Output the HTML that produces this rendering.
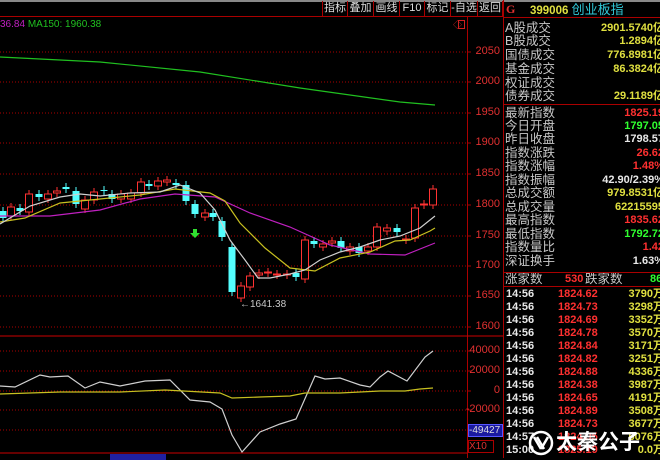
<!DOCTYPE html>
<html><head><meta charset="utf-8"><style>
*{margin:0;padding:0;box-sizing:border-box}
body{width:660px;height:458px;background:#000;overflow:hidden;position:relative;font-family:"Liberation Sans","Noto Sans CJK SC",sans-serif;font-size:12px}
.abs{position:absolute;white-space:nowrap;line-height:13px}
.btn{position:absolute;top:1px;height:16px;border-right:1px solid #a00;color:#ddd;font-size:11px;line-height:15px;text-align:center}
.lab{position:absolute;left:505px;color:#c8c8c8;font-size:12.5px;line-height:13px;white-space:nowrap}
.val{position:absolute;right:-4px;font-size:11px;line-height:13px;font-weight:bold;text-align:right;white-space:nowrap}
.ax{position:absolute;right:160px;color:#e03030;font-size:11px;line-height:11px}
.y{color:#e0e040}.r{color:#ff3030}.g{color:#30ff30}.w{color:#e8e8e8}
</style></head><body>
<div class="abs" style="left:0;top:0;width:660px;height:2px;background:#888"></div>
<div class="abs" style="left:0;top:16px;width:503px;height:1px;background:#a00"></div>
<div class="btn" style="left:322px;width:26px;border-left:1px solid #a00">指标</div>
<div class="btn" style="left:348px;width:26px">叠加</div>
<div class="btn" style="left:374px;width:26px">画线</div>
<div class="btn" style="left:400px;width:25px">F10</div>
<div class="btn" style="left:425px;width:26px">标记</div>
<div class="btn" style="left:451px;width:27px">-自选</div>
<div class="btn" style="left:478px;width:25px">返回</div>
<div class="abs" style="left:503px;top:0;width:1px;height:458px;background:#a00"></div>
<div class="abs" style="left:467px;top:17px;width:1px;height:441px;background:#a00"></div>
<div class="abs" style="left:506px;top:3px;color:#e03030;font-size:12px;font-family:'Liberation Serif',serif;font-weight:bold">G</div>
<div class="abs" style="left:530px;top:3px;color:#e0e040;font-size:11.5px;font-weight:bold">399006 <span style="color:#30c8d8;font-weight:normal;font-size:13px">创业板指</span></div>
<div class="abs" style="left:503px;top:17px;width:157px;height:1px;background:#a00"></div>
<div class="abs" style="left:0;top:18px;color:#c020c0;font-size:10px">36.84 <span style="color:#20c020">MA150: 1960.38</span></div>
<div class="abs" style="left:453px;top:19px;color:#d02020;font-size:9px">◇</div>
<div class="abs" style="left:458px;top:20px;width:7px;height:9px;border:1px solid #d02020"></div>

<svg class="abs" style="left:0;top:0" width="503" height="458" id="ch"></svg>

<div id="axes"></div>
<div id="rp"></div>

<div class="abs" style="left:468px;top:424px;width:35px;height:13px;background:#1a1aa0;border:1px solid #55f;color:#ddd;font-size:10px;line-height:11px">-49427</div>
<div class="abs" style="left:468px;top:440px;width:26px;height:13px;border:1px solid #a00;color:#e03030;font-size:10px;line-height:11px">X10</div>
<div class="abs" style="left:110px;top:454px;width:56px;height:6px;background:#2020a0"></div>
<div class="abs" style="left:503px;top:272px;width:157px;height:1px;background:#a00"></div>
<div class="abs" style="left:503px;top:286px;width:157px;height:1px;background:#a00"></div>
<div class="abs" style="left:503px;top:104px;width:157px;height:1px;background:#a00"></div>
<svg class="abs" style="left:528px;top:430px" width="26" height="26" viewBox="0 0 26 26"><circle cx="13" cy="13" r="11" fill="none" stroke="#fff" stroke-width="2.5"/><path d="M6 7 L13 19 M13 19 L20 7 M9 7 L16 19" stroke="#fff" stroke-width="2.5" fill="none"/></svg>
<div class="abs" style="left:556px;top:431px;line-height:24px;color:#fff;font-size:21px;font-weight:bold">太秦公子</div>
<script>
var s='';
function L(x1,y1,x2,y2,c,d){s+='<line x1="'+x1+'" y1="'+y1+'" x2="'+x2+'" y2="'+y2+'" stroke="'+c+'" stroke-width="1"'+(d?' stroke-dasharray="1,2"':'')+'/>';}
function P(pts,c){s+='<polyline fill="none" stroke="'+c+'" stroke-width="1.2" points="'+pts.map(p=>p.join(',')).join(' ')+'"/>';}
var gy=[52,82,113,143,174,205,236,266,296,327];
gy.forEach(y=>{L(0,y,467,y,'#a00',1);L(467,y,471,y,'#a00');});
L(0,336,503,336,'#c00');
[351,371,391,410,430].forEach(y=>{L(0,y,467,y,'#a00',1);L(467,y,471,y,'#a00');});
L(0,453,467,453,'#c00');
var c=[[3,211,218,0],[11,207,216,1],[20,208,211,0],[29,194,212,1],[39,194,197,0],[48,194,199,1],[57,191,193,1],[66,187,189,0],[76,191,204,0],[85,200,209,1],[94,192,200,1],[104,190,191,0],[112,194,199,0],[121,194,199,1],[131,193,199,1],[141,182,193,1],[149,184,186,0],[158,181,186,1],[167,180,182,1],[176,183,185,0],[186,185,201,0],[195,204,214,0],[205,213,217,1],[213,213,217,0],[222,221,237,0],[232,247,292,0],[241,286,298,1],[250,276,287,1],[259,273,275,1],[268,272,273,1],[277,274,275,1],[287,274,275,1],[296,273,277,0],[305,240,279,1],[314,241,244,0],[323,244,247,1],[332,241,243,1],[341,241,248,0],[350,247,251,1],[359,247,253,0],[368,247,251,1],[377,227,247,1],[387,228,231,1],[397,228,232,0],[406,239,240,1],[415,208,238,1],[424,204,205,1],[433,189,205,1]];
c.forEach(k=>{var x=k[0],t=k[1],b=k[2],col=k[3]?'#ff3232':'#54ffff';L(x,t-4,x,b+4,col);
if(k[3])s+='<rect x="'+(x-3.5)+'" y="'+t+'" width="7" height="'+Math.max(b-t,1)+'" fill="#000" stroke="'+col+'"/>';
else s+='<rect x="'+(x-3.5)+'" y="'+t+'" width="7" height="'+Math.max(b-t,1)+'" fill="'+col+'"/>';});
P([[0,57],[100,62],[200,72],[300,88],[400,102],[435,105]],'#20c020');
P([[0,216],[50,216],[100,210],[140,199],[175,194],[215,197],[250,213],[290,227],[330,245],[370,254],[405,255],[435,243]],'#c020c0');
P([[0,222],[25,218],[60,203],[100,199],[140,195],[175,189],[210,193],[225,201],[240,223],[265,248],[290,268],[315,271],[340,258],[370,252],[395,241],[410,240],[430,231],[435,228]],'#c8c020');
P([[0,224],[30,206],[60,197],[80,194],[100,196],[130,193],[160,192],[180,185],[200,193],[215,210],[230,240],[245,260],[258,278],[270,278],[290,274],[305,270],[320,260],[340,252],[360,247],[380,240],[400,236],[420,228],[435,216]],'#d0d0d0');
P([[0,386],[15,387],[40,375],[50,377],[68,376],[85,388],[100,382],[120,386],[145,381],[170,380],[190,400],[210,402],[222,409],[232,435],[242,452],[260,432],[280,424],[296,419],[315,376],[325,379],[340,378],[360,385],[370,387],[380,377],[388,371],[407,381],[425,357],[433,351]],'#d0d0d0');
P([[0,394],[60,392],[120,392],[165,390],[220,393],[232,398],[260,397],[290,396],[305,393],[340,393],[380,391],[405,391],[420,389],[433,388]],'#c8c020');
s+='<path d="M193 229 h4 v4 h3 l-5 5 l-5 -5 h3z" fill="#30e030"/>';
s+='<text x="240" y="307" fill="#c8c8c8" font-size="10" font-family="Liberation Sans">←1641.38</text>';
document.getElementById('ch').innerHTML=s;
var a='';
var lbl=[[2050,52],[2000,82],[1950,113],[1900,143],[1850,174],[1800,205],[1750,236],[1700,266],[1650,296],[1600,327],['40000',351],['20000',371],['0',391],['-20000',410]];
lbl.forEach(l=>a+='<div class="ax" style="top:'+(l[1]-6)+'px">'+l[0]+'</div>');
document.getElementById('axes').innerHTML=a;
var r='';
var rows=[['A股成交','2901.5740亿','y'],['B股成交','1.2894亿','y'],['国债成交','776.8981亿','y'],['基金成交','86.3824亿','y'],['权证成交','',''],['债券成交','29.1189亿','y'],['最新指数','1825.19','r'],['今日开盘','1797.05','g'],['昨日收盘','1798.57','w'],['指数涨跌','26.62','r'],['指数涨幅','1.48%','r'],['指数振幅','42.90/2.39%','w'],['总成交额','979.8531亿','y'],['总成交量','62215595','y'],['最高指数','1835.62','r'],['最低指数','1792.72','g'],['指数量比','1.42','r'],['深证换手','1.63%','w']];
var ys=[22,35,49,63,77,90,107,120,133,147,160,174,187,201,214,228,241,255];
rows.forEach((w,i)=>{r+='<div class="lab" style="top:'+ys[i]+'px">'+w[0]+'</div><div class="val '+w[2]+'" style="top:'+ys[i]+'px">'+w[1]+'</div>';});
r+='<div class="lab" style="top:273px">涨家数</div><div class="abs r" style="left:565px;top:273px;font-size:11px;font-weight:bold">530</div><div class="abs" style="left:585px;top:273px;color:#c8c8c8;font-size:12.5px">跌家数</div><div class="abs g" style="left:650px;top:273px;font-size:11px;font-weight:bold">86</div>';
var t=[['14:56','1824.62','3790'],['14:56','1824.73','3298'],['14:56','1824.69','3352'],['14:56','1824.78','3570'],['14:56','1824.84','3171'],['14:56','1824.82','3251'],['14:56','1824.88','4336'],['14:56','1824.38','3987'],['14:56','1824.65','4191'],['14:56','1824.89','3508'],['14:56','1824.73','3677'],['14:57','1824.95','6076'],['15:00','1825.19','0.0']];
t.forEach((w,i)=>{var y=288+i*13;r+='<div class="abs w" style="left:506px;top:'+y+'px;font-size:11px;font-weight:bold">'+w[0]+'</div><div class="abs r" style="left:558px;top:'+y+'px;font-size:11px;font-weight:bold">'+w[1]+'</div><div class="abs y" style="right:-4px;top:'+y+'px;font-size:11px;font-weight:bold">'+w[2]+'万</div>';});
document.getElementById('rp').innerHTML=r;
</script>
</body></html>
